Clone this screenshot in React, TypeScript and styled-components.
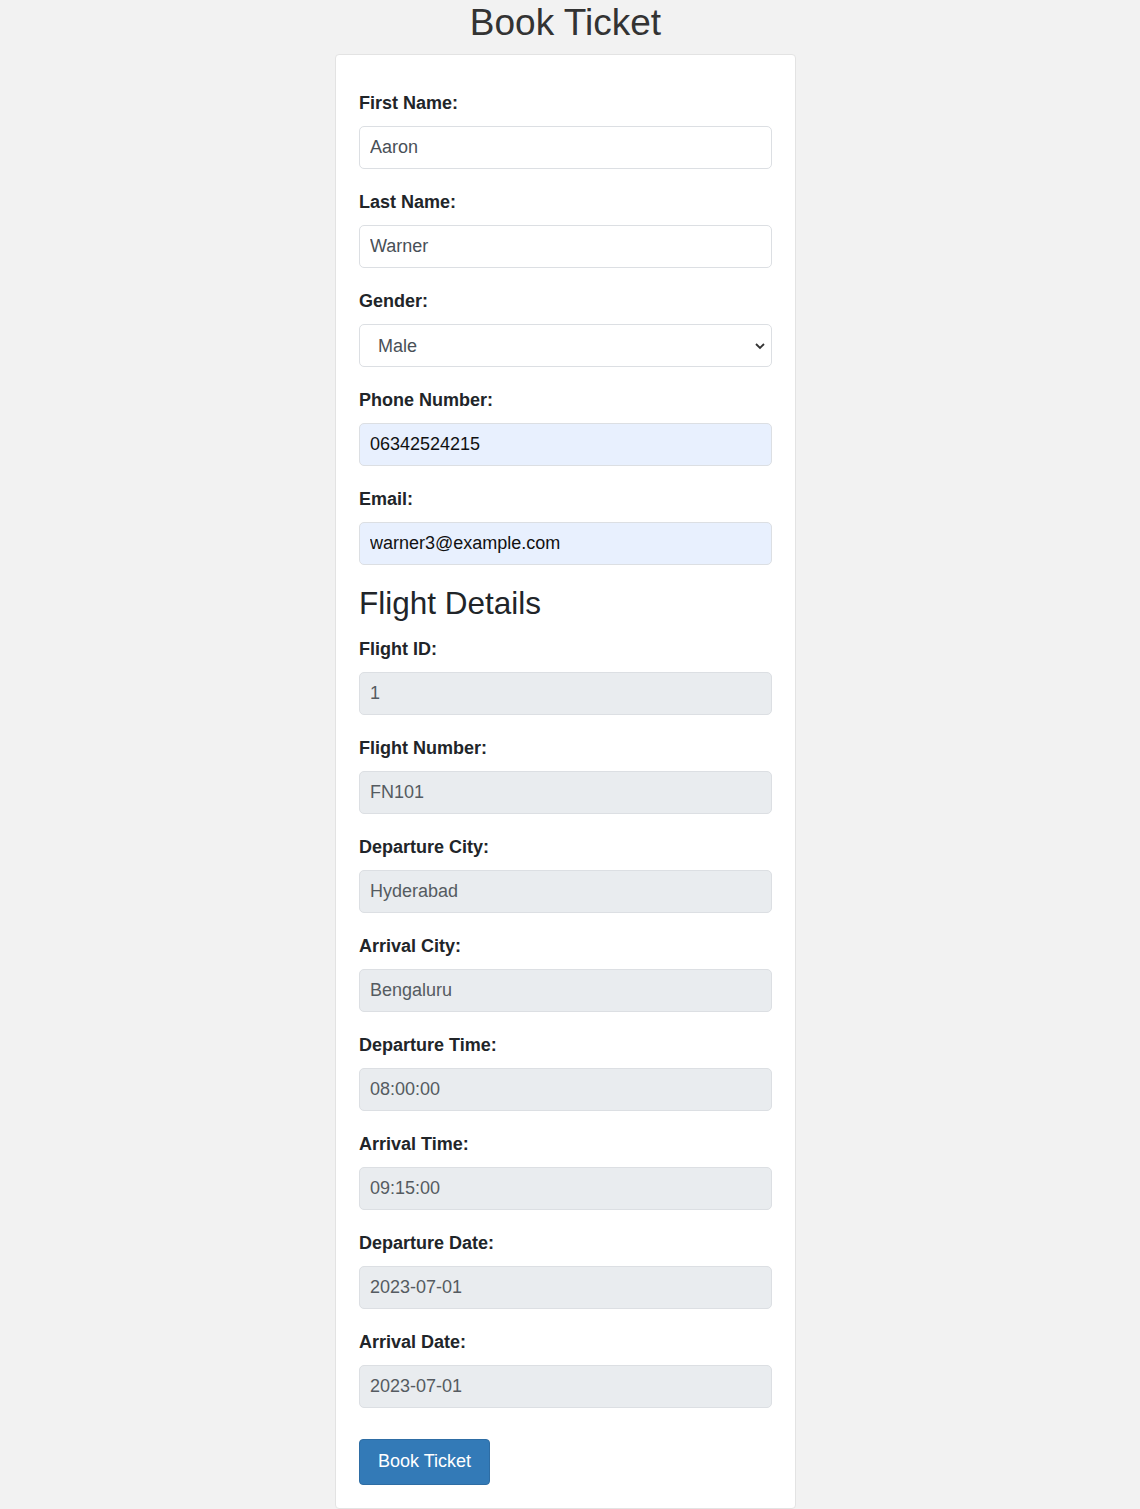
import React from 'react'
import styled, { createGlobalStyle } from 'styled-components'

const GlobalStyle = createGlobalStyle`
  html, body {
    margin: 0;
    padding: 0;
    background: #f2f2f2;
    font-family: "Liberation Sans", Arial, Helvetica, sans-serif;
    color: #212529;
  }
  * { box-sizing: border-box; }
`

const Page = styled.div`
  display: flex;
  flex-direction: column;
  align-items: center;
  padding: 0 9px 2px 0;
`

const Title = styled.h2`
  margin: 1px 0 9px;
  font-size: 37px;
  font-weight: 400;
  line-height: 44px;
  color: #333;
`

const Card = styled.form`
  width: 461px;
  background: #fff;
  border: 1px solid #e3e3e3;
  border-radius: 4px;
  padding: 35px 23px 23px;
`

const Group = styled.div`
  display: flex;
  flex-direction: column;
  margin-bottom: 20px;
`

const Label = styled.label`
  font-size: 18px;
  font-weight: 700;
  line-height: 27px;
  margin-bottom: 9px;
  color: #212529;
`

const Input = styled.input<{ $filled?: boolean }>`
  height: 43px;
  width: 100%;
  padding: 0 10px;
  font-family: inherit;
  font-size: 18px;
  color: ${p => (p.$filled ? '#111' : '#495057')};
  background: ${p => (p.$filled ? '#e8f0fe' : '#fff')};
  border: 1px solid #dcdfe3;
  border-radius: 5px;
  outline: none;
  &:disabled {
    background: #e9ecef;
    color: #555b61;
    opacity: 1;
  }
`

const SelectWrap = styled.div`
  position: relative;
`

const Select = styled.select`
  appearance: none;
  height: 43px;
  width: 100%;
  padding: 0 18px;
  font-family: inherit;
  font-size: 18px;
  color: #495057;
  background: #fff;
  border: 1px solid #dcdfe3;
  border-radius: 5px;
  outline: none;
`

const Chevron = styled.svg`
  position: absolute;
  right: 5px;
  top: 17px;
  pointer-events: none;
`

const Section = styled.h3`
  margin: 0 0 13px;
  font-size: 31.5px;
  font-weight: 400;
  line-height: 1.2;
  color: #212529;
`

const Button = styled.button`
  margin-top: 11px;
  height: 46px;
  padding: 0 18px;
  font-family: inherit;
  font-size: 18px;
  color: #fff;
  background: #337ab7;
  border: 1px solid #2e6da4;
  border-radius: 4px;
  cursor: pointer;
`

const personal = [
  { label: 'First Name:', value: 'Aaron' },
  { label: 'Last Name:', value: 'Warner' },
]

const contact = [
  { label: 'Phone Number:', value: '06342524215' },
  { label: 'Email:', value: 'warner3@example.com' },
]

const flight = [
  { label: 'Flight ID:', value: '1' },
  { label: 'Flight Number:', value: 'FN101' },
  { label: 'Departure City:', value: 'Hyderabad' },
  { label: 'Arrival City:', value: 'Bengaluru' },
  { label: 'Departure Time:', value: '08:00:00' },
  { label: 'Arrival Time:', value: '09:15:00' },
  { label: 'Departure Date:', value: '2023-07-01' },
  { label: 'Arrival Date:', value: '2023-07-01' },
]

export default function App() {
  return (
    <Page>
      <GlobalStyle />
      <Title>Book Ticket</Title>
      <Card onSubmit={e => e.preventDefault()}>
        {personal.map(f => (
          <Group key={f.label}>
            <Label>{f.label}</Label>
            <Input defaultValue={f.value} />
          </Group>
        ))}
        <Group>
          <Label>Gender:</Label>
          <SelectWrap>
            <Select defaultValue="Male">
              <option>Male</option>
              <option>Female</option>
              <option>Other</option>
            </Select>
            <Chevron width="14" height="10" viewBox="0 0 14 10">
              <path d="M3 3 L7 7 L11 3" fill="none" stroke="#333" strokeWidth="1.8" />
            </Chevron>
          </SelectWrap>
        </Group>
        {contact.map(f => (
          <Group key={f.label}>
            <Label>{f.label}</Label>
            <Input $filled defaultValue={f.value} />
          </Group>
        ))}
        <Section>Flight Details</Section>
        {flight.map(f => (
          <Group key={f.label}>
            <Label>{f.label}</Label>
            <Input disabled defaultValue={f.value} />
          </Group>
        ))}
        <Button type="submit">Book Ticket</Button>
      </Card>
    </Page>
  )
}
